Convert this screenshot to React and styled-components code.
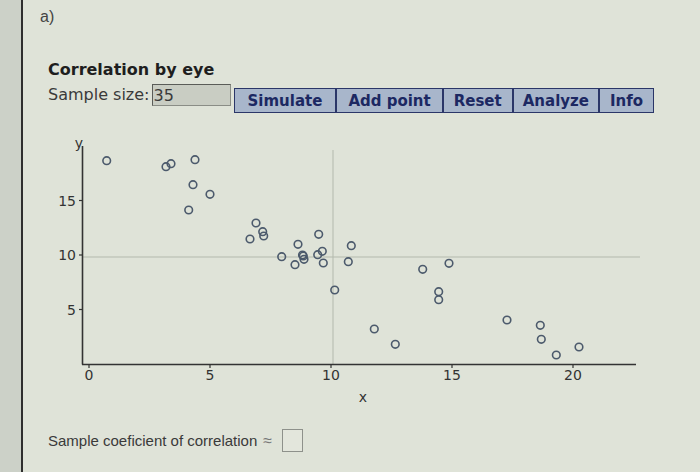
import React from "react";
import styled, { createGlobalStyle } from "styled-components";

const GlobalStyle = createGlobalStyle`
  html, body { margin: 0; padding: 0; background: #dfe3d8; }
  body { width: 700px; height: 472px; overflow: hidden; font-family: "DejaVu Sans", Verdana, sans-serif; }
`;

const Screen = styled.div`
  display: flex;
  width: 700px;
  height: 472px;
  background: #dfe3d8;
  overflow: hidden;
`;

const Bezel = styled.div`
  width: 21px;
  flex: none;
  background: #ccd1c8;
  border-right: 2px solid #2e2e2e;
`;

const Content = styled.div`
  flex: 1;
  padding: 8px 0 0 17px;
  display: flex;
  flex-direction: column;
`;

const PartLabel = styled.div`
  font-family: "Liberation Sans", Arial, sans-serif;
  font-size: 16px;
  line-height: 18px;
  color: #444;
`;

const Section = styled.section`
  margin: 34px 0 0 8px;
  display: flex;
  flex-direction: column;
`;

const Title = styled.h2`
  margin: 0;
  font-size: 16px;
  font-weight: bold;
  line-height: 20px;
  color: #1e1e1e;
`;

const Controls = styled.div`
  display: flex;
  align-items: flex-start;
  margin-top: 4px;
  gap: 3px;
`;

const FieldLabel = styled.label`
  display: flex;
  align-items: center;
  gap: 2px;
  font-size: 16px;
  line-height: 22px;
  color: #3a3a3a;
`;

const SizeInput = styled.input`
  width: 79px;
  height: 22px;
  box-sizing: border-box;
  margin: 0;
  padding: 0 1px;
  border: 1px solid #8a8d86;
  border-top-color: #5a5c58;
  border-left-color: #5a5c58;
  background: #c9cdc3;
  font-family: "DejaVu Sans", Verdana, sans-serif;
  font-size: 16px;
  color: #3a3a3a;
`;

const ButtonBar = styled.div`
  display: flex;
  margin-top: 4px;
  border: 1px solid #2b3668;
  background: #a8b6cb;
`;

const BarButton = styled.button`
  height: 23px;
  margin: 0;
  padding: 0 ${(p) => p.$pad}px;
  border: none;
  border-left: ${(p) => (p.$first ? "none" : "2px solid #2b3668")};
  background: transparent;
  font-family: "DejaVu Sans", Verdana, sans-serif;
  font-weight: bold;
  font-size: 15px;
  color: #1c2862;
  cursor: pointer;
`;

const Plot = styled.svg`
  display: block;
  margin-top: 17px;
  width: 612px;
  height: 280px;
  font-family: "DejaVu Sans", Verdana, sans-serif;
`;

const ResultRow = styled.div`
  display: flex;
  align-items: center;
  margin-top: 19px;
  font-family: "Liberation Sans", Arial, sans-serif;
  font-size: 15px;
  color: #3a3a3a;
`;

const Approx = styled.span`
  margin: 0 10px 0 6px;
  color: #777;
  font-size: 16px;
`;

const AnswerBox = styled.input`
  width: 21px;
  height: 23px;
  box-sizing: border-box;
  margin: 0;
  padding: 0;
  border: 1.5px solid #8e918b;
  background: #e3e6dc;
`;

const points = [
  [106.7, 160.7], [166, 166.7], [171, 163.7], [195, 159.7], [193, 184.7],
  [210, 194.3], [188.7, 210], [256, 223], [262.7, 231.7], [263.7, 236],
  [250, 239], [298, 244.3], [318.7, 234.3], [351.3, 245.7], [281.7, 256.7],
  [302.5, 255], [304, 259.3], [317.7, 254.7], [322.3, 251.3], [323.3, 263],
  [295, 264.7], [348.3, 261.7], [334.7, 290], [422.7, 269.3], [449, 263.3],
  [438.7, 291.7], [438.7, 299.7], [374.3, 329], [395.3, 344.3], [507, 320],
  [540.3, 325.3], [541.3, 339.3], [556.3, 355], [579, 347], [303.3, 256],
];

const X0 = 89;
const XS = 24.2;
const Y0 = 364;
const YS = 10.9;

const xTicks = [0, 5, 10, 15, 20];
const yTicks = [5, 10, 15];

const buttons = [
  { label: "Simulate", pad: 13 },
  { label: "Add point", pad: 11 },
  { label: "Reset", pad: 10 },
  { label: "Analyze", pad: 9 },
  { label: "Info", pad: 10 },
];

export default function App() {
  return (
    <>
      <GlobalStyle />
      <Screen>
        <Bezel />
        <Content>
          <PartLabel>a)</PartLabel>
          <Section>
            <Title>Correlation by eye</Title>
            <Controls>
              <FieldLabel>
                Sample size:
                <SizeInput defaultValue="35" />
              </FieldLabel>
              <ButtonBar>
                {buttons.map((b, i) => (
                  <BarButton key={b.label} $first={i === 0} $pad={b.pad}>
                    {b.label}
                  </BarButton>
                ))}
              </ButtonBar>
            </Controls>
            <Plot viewBox="48 130 612 280">
              <line x1="83" y1="257" x2="640" y2="257" stroke="#b3b9ad" strokeWidth="1" />
              <line x1="333" y1="150" x2="333" y2="364" stroke="#b3b9ad" strokeWidth="1" />
              <line x1="82.5" y1="146" x2="82.5" y2="364.5" stroke="#333" strokeWidth="1.6" />
              <line x1="82" y1="364.5" x2="636" y2="364.5" stroke="#333" strokeWidth="1.6" />
              {yTicks.map((t) => {
                const y = Y0 - t * YS;
                return (
                  <g key={t}>
                    <line x1="79" y1={y} x2="83" y2={y} stroke="#333" strokeWidth="1.2" />
                    <text x="76" y={y + 5} textAnchor="end" fontSize="14" fill="#333">
                      {t}
                    </text>
                  </g>
                );
              })}
              {xTicks.map((t) => {
                const x = X0 + t * XS;
                return (
                  <g key={t}>
                    <line x1={x} y1="364" x2={x} y2="368" stroke="#333" strokeWidth="1.2" />
                    <text x={x} y="380" textAnchor="middle" fontSize="14" fill="#333">
                      {t}
                    </text>
                  </g>
                );
              })}
              <text x="79" y="148" textAnchor="middle" fontSize="14" fill="#333">y</text>
              <text x="363" y="402" textAnchor="middle" fontSize="14" fill="#333">x</text>
              {points.map(([x, y], i) => (
                <circle key={i} cx={x} cy={y} r="3.8" fill="none" stroke="#4c5a6c" strokeWidth="1.6" />
              ))}
            </Plot>
            <ResultRow>
              Sample coeficient of correlation
              <Approx>≈</Approx>
              <AnswerBox />
            </ResultRow>
          </Section>
        </Content>
      </Screen>
    </>
  );
}
